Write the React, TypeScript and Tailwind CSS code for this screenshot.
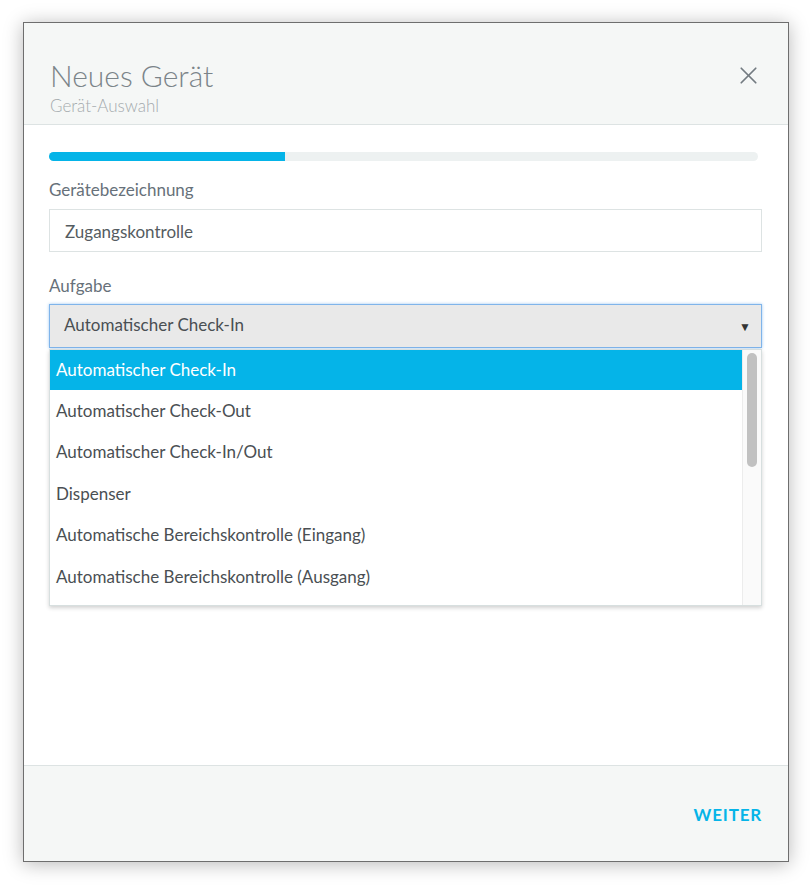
import { X } from 'lucide-react';

const options = [
  'Automatischer Check-In',
  'Automatischer Check-Out',
  'Automatischer Check-In/Out',
  'Dispenser',
  'Automatische Bereichskontrolle (Eingang)',
  'Automatische Bereichskontrolle (Ausgang)',
];

export default function App() {
  return (
    <div className="min-h-[885px] bg-white pl-[23px] pt-[22px] font-['Lato','Open_Sans',sans-serif]">
      <div className="flex h-[840px] w-[766px] flex-col border border-[#6e6e6e] bg-white shadow-[0_2px_18px_rgba(0,0,0,0.28)]">
        {/* Header */}
        <div className="flex h-[102px] shrink-0 items-start justify-between border-b border-[#dde3e3] bg-[#f5f7f6] pl-[26px] pr-[25px]">
          <div className="pt-[34px]">
            <h1 className="text-[30px] font-light leading-[36px] text-[#7b8489]">Neues Gerät</h1>
            <p className="mt-[3px] text-[17px] font-light leading-[20px] text-[#a4aaad]">Gerät-Auswahl</p>
          </div>
          <button className="mt-[38px] text-[#737b80]">
            <X size={29} strokeWidth={1.4} />
          </button>
        </div>

        {/* Body */}
        <div className="flex-1 px-[25px] pt-[27px]">
          <div className="h-[9px] w-[709px] overflow-hidden rounded-full bg-[#edf1f1]">
            <div className="h-full w-[236px] bg-[#05b4e8]" />
          </div>

          <label className="mt-[19px] block text-[17px] leading-[20px] text-[#67717a]">Gerätebezeichnung</label>
          <div className="mt-[9px] flex h-[43px] w-[713px] items-center border border-[#dde3e3] bg-white px-[15px] pt-[2px] text-[17px] text-[#555c61]">
            Zugangskontrolle
          </div>

          <label className="mt-[24px] block text-[17px] leading-[20px] text-[#67717a]">Aufgabe</label>
          <div className="relative mt-[8px] w-[713px]">
            <div className="flex h-[44px] items-center justify-between border border-[#7fb4ea] bg-[#e9e9e9] pb-[2px] pl-[14px] pr-[10px] text-[17px] text-[#4a4f53] shadow-[0_0_3px_#9fc9f1]">
              <span>Automatischer Check-In</span>
              <span className="pt-[4px] text-[12px] text-[#333]">▼</span>
            </div>
            <div className="absolute left-0 top-[45px] flex h-[257px] w-[713px] border border-[#d7dfdf] bg-white shadow-[0_2px_4px_rgba(0,0,0,0.18)]">
              <ul className="flex-1">
                {options.map((o, i) => (
                  <li
                    key={o}
                    className={
                      i === 0
                        ? 'flex h-[40px] items-center bg-[#05b4e8] pb-[1px] pl-[6px] text-[17px] text-white'
                        : 'flex h-[41.5px] items-center pb-[1px] pl-[6px] text-[17px] text-[#4a4f53]'
                    }
                  >
                    {o}
                  </li>
                ))}
              </ul>
              <div className="w-[19px] border-l border-[#ececec] bg-[#fafafa] px-[4px] pt-[3px]">
                <div className="h-[114px] w-[10px] rounded-full bg-[#c1c1c1]" />
              </div>
            </div>
          </div>
        </div>

        {/* Footer */}
        <div className="flex h-[96px] shrink-0 items-center justify-end border-t border-[#dde3e3] bg-[#f5f7f6] pr-[26px]">
          <button className="pt-[2px] text-[17px] font-bold tracking-[0.8px] text-[#05b4e8]">WEITER</button>
        </div>
      </div>
    </div>
  );
}
